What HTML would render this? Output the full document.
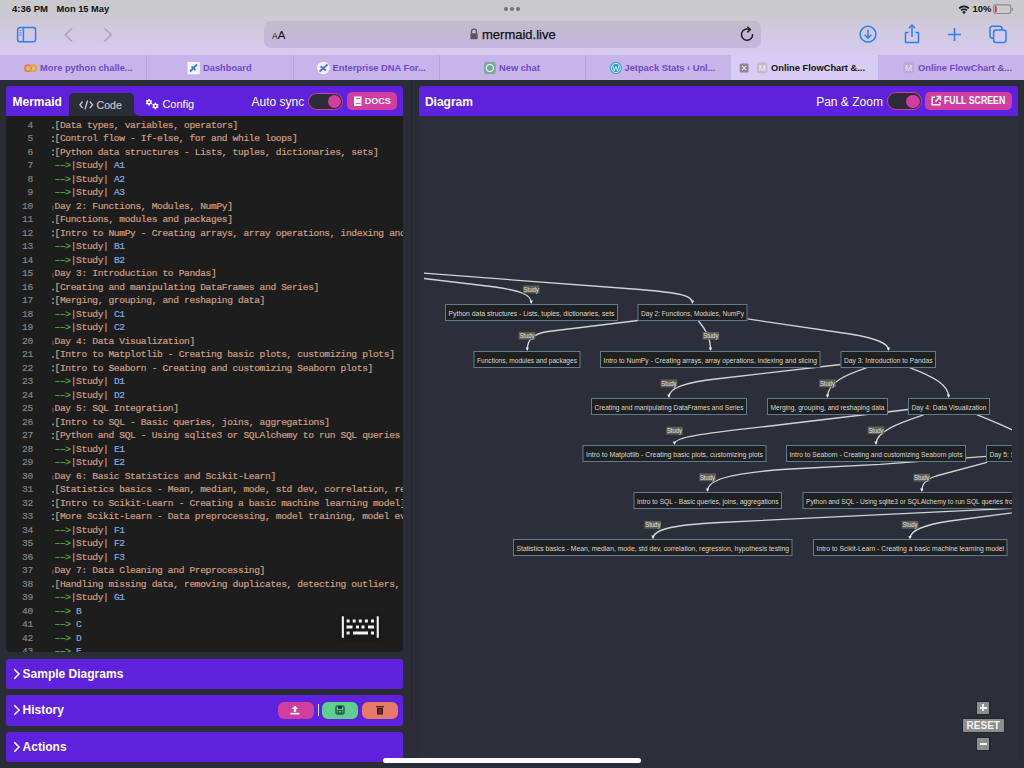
<!DOCTYPE html><html><head><meta charset="utf-8"><style>
*{margin:0;padding:0;box-sizing:border-box}
html,body{width:1024px;height:768px;overflow:hidden;background:#2a2d36;font-family:"Liberation Sans",sans-serif}
.a{position:absolute}
.top{left:0;top:0;width:1024px;height:55px;background:linear-gradient(#c9c9cc 0%,#cac9ce 20%,#d0cadf 55%,#d6caf2 100%)}
.tabs{left:0;top:55px;width:1024px;height:25px;background:#c6b4eb}
.tab{top:0;height:25px;width:146.3px;border-left:1px solid #b9a3e0}
.tabt{top:0;height:25px;line-height:27px;font-size:9.3px;font-weight:700;color:#7048cc;white-space:nowrap}
.hdr{background:#5e22dd;border-radius:4px 4px 0 0}
.wt{color:#fff;white-space:nowrap}
.code{background:#1d1d1d;overflow:hidden;border-radius:0 0 4px 4px}
.ln{font-family:"Liberation Mono",monospace;font-size:9.6px;letter-spacing:-0.36px;line-height:13.49px;white-space:pre;-webkit-text-stroke:0.2px currentColor}
.sec{background:#5e22dd;border-radius:3px}
</style></head><body>
<div class="a top"></div>
<div class="a wt" style="left:12px;top:2px;font-size:9.5px;font-weight:700;color:#111;line-height:14px">4:36 PM</div>
<div class="a wt" style="left:56.5px;top:2px;font-size:9.3px;font-weight:700;color:#111;line-height:14px">Mon 15 May</div>
<div class="a" style="left:504.0px;top:6.9px;width:3.8px;height:3.8px;border-radius:50%;background:#717176"></div>
<div class="a" style="left:510.0px;top:6.9px;width:3.8px;height:3.8px;border-radius:50%;background:#717176"></div>
<div class="a" style="left:516.0px;top:6.9px;width:3.8px;height:3.8px;border-radius:50%;background:#717176"></div>
<svg class="a" style="left:958px;top:4px" width="12" height="10" viewBox="0 0 12 10">
<path d="M1.2,4.3 A7,7 0 0 1 10.8,4.3" stroke="#111" stroke-width="1.7" fill="none"/>
<path d="M3.1,6.4 A4.2,4.2 0 0 1 8.9,6.4" stroke="#111" stroke-width="1.7" fill="none"/>
<path d="M4.6,8.2 A2,2 0 0 1 7.4,8.2 L6,9.4 Z" fill="#111" stroke="#111" stroke-width="0.8"/></svg>
<div class="a wt" style="left:972.5px;top:2.3px;font-size:9.4px;font-weight:700;color:#111;line-height:14px">10%</div>
<svg class="a" style="left:992px;top:3px" width="24" height="12" viewBox="0 0 24 12">
<rect x="1.6" y="1.9" width="17.2" height="8.6" rx="2.4" fill="none" stroke="#8c8b92" stroke-width="1.2"/>
<rect x="2.9" y="3.2" width="1.8" height="6" rx="0.6" fill="#e8332a"/>
<path d="M20,4.8 Q21,6.2 20,7.6" stroke="#8c8b92" stroke-width="1.2" fill="none"/></svg>
<svg class="a" style="left:16px;top:26px" width="22" height="18" viewBox="0 0 22 18">
<rect x="1.6" y="1.6" width="18" height="14.2" rx="2.3" fill="none" stroke="#2f7cf6" stroke-width="1.5"/>
<line x1="7.4" y1="1.6" x2="7.4" y2="15.8" stroke="#2f7cf6" stroke-width="1.5"/>
<line x1="3.6" y1="4.6" x2="5.4" y2="4.6" stroke="#2f7cf6" stroke-width="1"/>
<line x1="3.6" y1="6.8" x2="5.4" y2="6.8" stroke="#2f7cf6" stroke-width="1"/>
<line x1="3.6" y1="9" x2="5.4" y2="9" stroke="#2f7cf6" stroke-width="1"/></svg>
<svg class="a" style="left:60px;top:25px" width="60" height="20" viewBox="0 0 60 20">
<path d="M12.2,3.2 L5.2,9.8 L12.2,16.4" stroke="#a8a2b8" stroke-width="1.4" fill="none"/>
<path d="M44.3,3.2 L51.3,9.8 L44.3,16.4" stroke="#a8a2b8" stroke-width="1.4" fill="none"/></svg>
<div class="a" style="left:263.5px;top:21px;width:497.5px;height:26.5px;border-radius:7px;background:linear-gradient(#c0bdcb,#c4b5e2)"></div>
<div class="a wt" style="left:272px;top:26px;color:#111;line-height:16px"><span style="font-size:8.5px">A</span><span style="font-size:11.5px">A</span></div>
<svg class="a" style="left:468px;top:27px" width="12" height="14" viewBox="0 0 12 14">
<path d="M3.5,6.5 V4.6 A2.5,2.5 0 0 1 8.5,4.6 V6.5" stroke="#58565e" stroke-width="1.3" fill="none"/>
<rect x="2.4" y="6.3" width="7.2" height="6" rx="1" fill="#58565e"/></svg>
<div class="a wt" style="left:482px;top:26.6px;font-size:13px;color:#111;line-height:16px;-webkit-text-stroke:0.25px #111">mermaid.live</div>
<svg class="a" style="left:738px;top:25px" width="18" height="18" viewBox="0 0 18 18">
<path d="M11.5,4.6 A5.6,5.6 0 1 0 14.6,9" stroke="#222" stroke-width="1.5" fill="none"/>
<path d="M9.3,1.8 L12.4,4.6 L9.3,7.4" stroke="#222" stroke-width="1.5" fill="none"/></svg>
<svg class="a" style="left:855px;top:22px" width="160" height="24" viewBox="0 0 160 24">
<circle cx="13" cy="12.2" r="7.9" stroke="#2f7cf6" stroke-width="1.5" fill="none"/>
<path d="M13,7.5 V16 M9.6,12.8 L13,16.2 L16.4,12.8" stroke="#2f7cf6" stroke-width="1.5" fill="none"/>
<path d="M53.5,10.5 H50.5 V20.5 H63.5 V10.5 H60.5" stroke="#2f7cf6" stroke-width="1.5" fill="none" stroke-linejoin="round"/>
<path d="M57,15 V3.2 M53.8,6.2 L57,3 L60.2,6.2" stroke="#2f7cf6" stroke-width="1.5" fill="none"/>
<path d="M99.5,6 V19 M93,12.5 H106" stroke="#2f7cf6" stroke-width="1.6" fill="none"/>
<rect x="135" y="4.3" width="12" height="12" rx="2.5" stroke="#2f7cf6" stroke-width="1.5" fill="none"/>
<rect x="138.6" y="8" width="12.4" height="12.5" rx="2.5" stroke="#2f7cf6" stroke-width="1.5" fill="#d6c8ee"/></svg>
<div class="a tabs"></div>
<div class="a" style="left:0.00px;top:55px;width:146.29px;height:25px;background:transparent;border-left:none"></div>
<div class="a tabt" style="left:40.1px;top:55px;color:#7048cc">More python challe...</div>
<div class="a" style="left:146.29px;top:55px;width:146.29px;height:25px;background:transparent;border-left:1px solid #b8a2df"></div>
<div class="a tabt" style="left:203px;top:55px;color:#7048cc">Dashboard</div>
<div class="a" style="left:292.58px;top:55px;width:146.29px;height:25px;background:transparent;border-left:1px solid #b8a2df"></div>
<div class="a tabt" style="left:332.5px;top:55px;color:#7048cc">Enterprise DNA For...</div>
<div class="a" style="left:438.87px;top:55px;width:146.29px;height:25px;background:transparent;border-left:1px solid #b8a2df"></div>
<div class="a tabt" style="left:499px;top:55px;color:#7048cc">New chat</div>
<div class="a" style="left:585.16px;top:55px;width:146.29px;height:25px;background:transparent;border-left:1px solid #b8a2df"></div>
<div class="a tabt" style="left:624.5px;top:55px;color:#7048cc">Jetpack Stats ‹ Unl...</div>
<div class="a" style="left:731.45px;top:55px;width:146.29px;height:25px;background:#d7ccf3;border-left:none"></div>
<div class="a tabt" style="left:771px;top:55px;color:#111">Online FlowChart &amp;...</div>
<div class="a" style="left:877.74px;top:55px;width:146.29px;height:25px;background:transparent;border-left:none"></div>
<div class="a tabt" style="left:918px;top:55px;color:#7048cc">Online FlowChart &amp;...</div>
<svg class="a" style="left:0;top:55px" width="1024" height="25" viewBox="0 0 1024 25">
<circle cx="28.1" cy="13.2" r="3.05" stroke="#f07f10" stroke-width="1.7" fill="none"/>
<circle cx="33.3" cy="13.2" r="3.05" stroke="#f5a410" stroke-width="1.7" fill="none"/>
<rect x="187.5" y="7" width="12.3" height="12.3" fill="#f4f4f8"/>
<path d="M190,16.5 L197,9.5 M191.5,11.5 L195.5,15" stroke="#3a7bd5" stroke-width="1.8"/>
<circle cx="323.4" cy="13" r="6.2" fill="#f2f2f7"/>
<path d="M319.5,16.5 L327.5,9.5 M320.5,11.5 L326,15.5" stroke="#4a73d8" stroke-width="1.7"/>
<rect x="484" y="7" width="11.7" height="12" rx="2.5" fill="#74aa9c"/>
<circle cx="489.85" cy="13" r="3.5" stroke="#e9f5f0" stroke-width="1.1" fill="none"/>
<circle cx="615.9" cy="13" r="6.1" fill="#2aa0d8"/>
<circle cx="615.9" cy="13" r="4.6" fill="none" stroke="#e8f4fb" stroke-width="0.9"/>
<path d="M612.8,10.5 L614.3,16 L615.9,11.5 L617.5,16 L619,10.5" stroke="#e8f4fb" stroke-width="1" fill="none"/>
<rect x="739.7" y="8.6" width="8.8" height="8.8" rx="1.5" fill="#8a8591"/>
<path d="M742,10.9 L746.2,15.1 M746.2,10.9 L742,15.1" stroke="#e8e4ee" stroke-width="1.1"/>
<rect x="757" y="7.3" width="10.5" height="11" rx="2.5" fill="#c2bdc8"/>
<text x="762.25" y="16.3" font-family="Liberation Sans" font-size="8.5" fill="#f4f2f6" text-anchor="middle">M</text>
<rect x="903.3" y="7.3" width="10.6" height="11" rx="2.5" fill="#b9acd2"/>
<text x="908.6" y="16.3" font-family="Liberation Sans" font-size="8.5" fill="#ece6f6" text-anchor="middle">M</text>
</svg>
<div class="a hdr" style="left:6px;top:86px;width:397px;height:30px"></div>
<div class="a wt" style="left:12.5px;top:94px;font-size:12px;font-weight:700;line-height:16px">Mermaid</div>
<div class="a" style="left:68.7px;top:92.5px;width:65.4px;height:24px;background:#2a2d36;border-radius:5px 5px 0 0"></div>
<div class="a" style="left:134px;top:108px;width:8px;height:8px;background:#2a2d36"></div>
<div class="a" style="left:134px;top:100px;width:8px;height:16px;background:#5e22dd;border-radius:0 0 0 6px"></div>
<svg class="a" style="left:79px;top:100px" width="15" height="10" viewBox="0 0 15 10">
<path d="M3.6,1.5 L0.9,4.8 L3.6,8.1 M10.8,1.5 L13.5,4.8 L10.8,8.1 M8.6,0.5 L6,9.2" stroke="#c9c9d1" stroke-width="1.35" fill="none"/></svg>
<div class="a wt" style="left:96.5px;top:96.6px;font-size:10.6px;line-height:16px;color:#c9c9d1;-webkit-text-stroke:0.15px #c9c9d1">Code</div>
<svg class="a" style="left:140px;top:95px" width="25" height="18" viewBox="0 0 25 18"><circle cx="9" cy="7.3" r="2.45" fill="#fff"/><line x1="9.00" y1="3.95" x2="9.00" y2="10.65" stroke="#fff" stroke-width="1.5"/><line x1="11.90" y1="5.62" x2="6.10" y2="8.97" stroke="#fff" stroke-width="1.5"/><line x1="11.90" y1="8.97" x2="6.10" y2="5.62" stroke="#fff" stroke-width="1.5"/><circle cx="9" cy="7.3" r="0.95" fill="#5e22dd"/><circle cx="15.4" cy="11" r="2.45" fill="#fff"/><line x1="15.40" y1="7.65" x2="15.40" y2="14.35" stroke="#fff" stroke-width="1.5"/><line x1="18.30" y1="9.32" x2="12.50" y2="12.68" stroke="#fff" stroke-width="1.5"/><line x1="18.30" y1="12.68" x2="12.50" y2="9.32" stroke="#fff" stroke-width="1.5"/><circle cx="15.4" cy="11" r="0.95" fill="#5e22dd"/></svg>
<div class="a wt" style="left:162.4px;top:96px;font-size:11px;line-height:16px">Config</div>
<div class="a wt" style="left:251.6px;top:94px;font-size:12px;line-height:16px">Auto sync</div>
<div class="a" style="left:308.4px;top:92.6px;width:35px;height:17.6px;border-radius:9px;background:#2a2d36;border:1px solid #d03e9f"></div>
<div class="a" style="left:328px;top:94.8px;width:13.4px;height:13.4px;border-radius:50%;background:#d03e9f"></div>
<div class="a" style="left:347px;top:92px;width:50.4px;height:17.8px;border-radius:5px;background:#d03e9f"></div>
<svg class="a" style="left:353px;top:96px" width="10" height="11" viewBox="0 0 10 11">
<path d="M1,1.5 A1,1 0 0 1 2,0.5 H8.5 V10 H2 A1,1 0 0 1 1,9 Z" fill="#fff"/>
<path d="M2.6,7.6 H7.6 M3,2.6 H7" stroke="#d03e9f" stroke-width="0.9"/></svg>
<div class="a wt" style="left:364.8px;top:93px;font-size:9px;font-weight:700;line-height:16px">DOCS</div>
<div class="a code" style="left:6px;top:116px;width:397px;height:535.5px"></div>
<div class="a" style="left:6px;top:116px;width:397px;height:535.5px;overflow:hidden">
<div class="a ln" style="left:21.40px;top:3.00px;color:#858585">4</div>
<div class="a ln" style="left:48.50px;top:3.00px;color:#ce9f82">[Data types, variables, operators]</div>
<div class="a ln" style="left:21.40px;top:16.49px;color:#858585">5</div>
<div class="a ln" style="left:48.50px;top:16.49px;color:#ce9f82">[Control flow - If-else, for and while loops]</div>
<div class="a ln" style="left:21.40px;top:29.98px;color:#858585">6</div>
<div class="a ln" style="left:48.50px;top:29.98px;color:#ce9f82">[Python data structures - Lists, tuples, dictionaries, sets]</div>
<div class="a ln" style="left:21.40px;top:43.47px;color:#858585">7</div>
<div class="a ln" style="left:48.50px;top:43.47px"><span style="color:#55b534">––&gt;</span><span style="color:#ce9f82">|Study|</span> <span style="color:#82ade0">A1</span></div>
<div class="a ln" style="left:21.40px;top:56.96px;color:#858585">8</div>
<div class="a ln" style="left:48.50px;top:56.96px"><span style="color:#55b534">––&gt;</span><span style="color:#ce9f82">|Study|</span> <span style="color:#82ade0">A2</span></div>
<div class="a ln" style="left:21.40px;top:70.45px;color:#858585">9</div>
<div class="a ln" style="left:48.50px;top:70.45px"><span style="color:#55b534">––&gt;</span><span style="color:#ce9f82">|Study|</span> <span style="color:#82ade0">A3</span></div>
<div class="a ln" style="left:16.00px;top:83.94px;color:#858585">10</div>
<div class="a ln" style="left:48.50px;top:83.94px;color:#ce9f82">Day 2: Functions, Modules, NumPy]</div>
<div class="a ln" style="left:16.00px;top:97.43px;color:#858585">11</div>
<div class="a ln" style="left:48.50px;top:97.43px;color:#ce9f82">[Functions, modules and packages]</div>
<div class="a ln" style="left:16.00px;top:110.92px;color:#858585">12</div>
<div class="a ln" style="left:48.50px;top:110.92px;color:#ce9f82">[Intro to NumPy - Creating arrays, array operations, indexing and slicing]</div>
<div class="a ln" style="left:16.00px;top:124.41px;color:#858585">13</div>
<div class="a ln" style="left:48.50px;top:124.41px"><span style="color:#55b534">––&gt;</span><span style="color:#ce9f82">|Study|</span> <span style="color:#82ade0">B1</span></div>
<div class="a ln" style="left:16.00px;top:137.90px;color:#858585">14</div>
<div class="a ln" style="left:48.50px;top:137.90px"><span style="color:#55b534">––&gt;</span><span style="color:#ce9f82">|Study|</span> <span style="color:#82ade0">B2</span></div>
<div class="a ln" style="left:16.00px;top:151.39px;color:#858585">15</div>
<div class="a ln" style="left:48.50px;top:151.39px;color:#ce9f82">Day 3: Introduction to Pandas]</div>
<div class="a ln" style="left:16.00px;top:164.88px;color:#858585">16</div>
<div class="a ln" style="left:48.50px;top:164.88px;color:#ce9f82">[Creating and manipulating DataFrames and Series]</div>
<div class="a ln" style="left:16.00px;top:178.37px;color:#858585">17</div>
<div class="a ln" style="left:48.50px;top:178.37px;color:#ce9f82">[Merging, grouping, and reshaping data]</div>
<div class="a ln" style="left:16.00px;top:191.86px;color:#858585">18</div>
<div class="a ln" style="left:48.50px;top:191.86px"><span style="color:#55b534">––&gt;</span><span style="color:#ce9f82">|Study|</span> <span style="color:#82ade0">C1</span></div>
<div class="a ln" style="left:16.00px;top:205.35px;color:#858585">19</div>
<div class="a ln" style="left:48.50px;top:205.35px"><span style="color:#55b534">––&gt;</span><span style="color:#ce9f82">|Study|</span> <span style="color:#82ade0">C2</span></div>
<div class="a ln" style="left:16.00px;top:218.84px;color:#858585">20</div>
<div class="a ln" style="left:48.50px;top:218.84px;color:#ce9f82">Day 4: Data Visualization]</div>
<div class="a ln" style="left:16.00px;top:232.33px;color:#858585">21</div>
<div class="a ln" style="left:48.50px;top:232.33px;color:#ce9f82">[Intro to Matplotlib - Creating basic plots, customizing plots]</div>
<div class="a ln" style="left:16.00px;top:245.82px;color:#858585">22</div>
<div class="a ln" style="left:48.50px;top:245.82px;color:#ce9f82">[Intro to Seaborn - Creating and customizing Seaborn plots]</div>
<div class="a ln" style="left:16.00px;top:259.31px;color:#858585">23</div>
<div class="a ln" style="left:48.50px;top:259.31px"><span style="color:#55b534">––&gt;</span><span style="color:#ce9f82">|Study|</span> <span style="color:#82ade0">D1</span></div>
<div class="a ln" style="left:16.00px;top:272.80px;color:#858585">24</div>
<div class="a ln" style="left:48.50px;top:272.80px"><span style="color:#55b534">––&gt;</span><span style="color:#ce9f82">|Study|</span> <span style="color:#82ade0">D2</span></div>
<div class="a ln" style="left:16.00px;top:286.29px;color:#858585">25</div>
<div class="a ln" style="left:48.50px;top:286.29px;color:#ce9f82">Day 5: SQL Integration]</div>
<div class="a ln" style="left:16.00px;top:299.78px;color:#858585">26</div>
<div class="a ln" style="left:48.50px;top:299.78px;color:#ce9f82">[Intro to SQL - Basic queries, joins, aggregations]</div>
<div class="a ln" style="left:16.00px;top:313.27px;color:#858585">27</div>
<div class="a ln" style="left:48.50px;top:313.27px;color:#ce9f82">[Python and SQL - Using sqlite3 or SQLAlchemy to run SQL queries from Python]</div>
<div class="a ln" style="left:16.00px;top:326.76px;color:#858585">28</div>
<div class="a ln" style="left:48.50px;top:326.76px"><span style="color:#55b534">––&gt;</span><span style="color:#ce9f82">|Study|</span> <span style="color:#82ade0">E1</span></div>
<div class="a ln" style="left:16.00px;top:340.25px;color:#858585">29</div>
<div class="a ln" style="left:48.50px;top:340.25px"><span style="color:#55b534">––&gt;</span><span style="color:#ce9f82">|Study|</span> <span style="color:#82ade0">E2</span></div>
<div class="a ln" style="left:16.00px;top:353.74px;color:#858585">30</div>
<div class="a ln" style="left:48.50px;top:353.74px;color:#ce9f82">Day 6: Basic Statistics and Scikit-Learn]</div>
<div class="a ln" style="left:16.00px;top:367.23px;color:#858585">31</div>
<div class="a ln" style="left:48.50px;top:367.23px;color:#ce9f82">[Statistics basics - Mean, median, mode, std dev, correlation, regression, hypothesis testing]</div>
<div class="a ln" style="left:16.00px;top:380.72px;color:#858585">32</div>
<div class="a ln" style="left:48.50px;top:380.72px;color:#ce9f82">[Intro to Scikit-Learn - Creating a basic machine learning model]</div>
<div class="a ln" style="left:16.00px;top:394.21px;color:#858585">33</div>
<div class="a ln" style="left:48.50px;top:394.21px;color:#ce9f82">[More Scikit-Learn - Data preprocessing, model training, model evaluation]</div>
<div class="a ln" style="left:16.00px;top:407.70px;color:#858585">34</div>
<div class="a ln" style="left:48.50px;top:407.70px"><span style="color:#55b534">––&gt;</span><span style="color:#ce9f82">|Study|</span> <span style="color:#82ade0">F1</span></div>
<div class="a ln" style="left:16.00px;top:421.19px;color:#858585">35</div>
<div class="a ln" style="left:48.50px;top:421.19px"><span style="color:#55b534">––&gt;</span><span style="color:#ce9f82">|Study|</span> <span style="color:#82ade0">F2</span></div>
<div class="a ln" style="left:16.00px;top:434.68px;color:#858585">36</div>
<div class="a ln" style="left:48.50px;top:434.68px"><span style="color:#55b534">––&gt;</span><span style="color:#ce9f82">|Study|</span> <span style="color:#82ade0">F3</span></div>
<div class="a ln" style="left:16.00px;top:448.17px;color:#858585">37</div>
<div class="a ln" style="left:48.50px;top:448.17px;color:#ce9f82">Day 7: Data Cleaning and Preprocessing]</div>
<div class="a ln" style="left:16.00px;top:461.66px;color:#858585">38</div>
<div class="a ln" style="left:48.50px;top:461.66px;color:#ce9f82">[Handling missing data, removing duplicates, detecting outliers, etc]</div>
<div class="a ln" style="left:16.00px;top:475.15px;color:#858585">39</div>
<div class="a ln" style="left:48.50px;top:475.15px"><span style="color:#55b534">––&gt;</span><span style="color:#ce9f82">|Study|</span> <span style="color:#82ade0">G1</span></div>
<div class="a ln" style="left:16.00px;top:488.64px;color:#858585">40</div>
<div class="a ln" style="left:48.50px;top:488.64px"><span style="color:#55b534">––&gt;</span> <span style="color:#82ade0">B</span></div>
<div class="a ln" style="left:16.00px;top:502.13px;color:#858585">41</div>
<div class="a ln" style="left:48.50px;top:502.13px"><span style="color:#55b534">––&gt;</span> <span style="color:#82ade0">C</span></div>
<div class="a ln" style="left:16.00px;top:515.62px;color:#858585">42</div>
<div class="a ln" style="left:48.50px;top:515.62px"><span style="color:#55b534">––&gt;</span> <span style="color:#82ade0">D</span></div>
<div class="a ln" style="left:16.00px;top:529.11px;color:#858585">43</div>
<div class="a ln" style="left:48.50px;top:529.11px"><span style="color:#55b534">––&gt;</span> <span style="color:#82ade0">E</span></div>
</div>
<svg class="a" style="left:0;top:0" width="60" height="660" viewBox="0 0 60 660">
<rect x="52.2" y="126.9" width="1.6" height="1.6" fill="#82ade0"/>
<rect x="52.2" y="136.2" width="1.6" height="1.6" fill="#82ade0"/><rect x="52.2" y="140.4" width="1.6" height="1.6" fill="#82ade0"/>
<rect x="52.2" y="149.7" width="1.6" height="1.6" fill="#82ade0"/><rect x="52.2" y="153.9" width="1.6" height="1.6" fill="#82ade0"/>
<rect x="52.4" y="205.6" width="1.1" height="4.6" fill="#ce9f82" opacity="0.45"/>
<rect x="52.2" y="221.3" width="1.6" height="1.6" fill="#82ade0"/>
<rect x="52.2" y="230.6" width="1.6" height="1.6" fill="#82ade0"/><rect x="52.2" y="234.8" width="1.6" height="1.6" fill="#82ade0"/>
<rect x="52.4" y="273.1" width="1.1" height="4.6" fill="#ce9f82" opacity="0.45"/>
<rect x="52.2" y="288.8" width="1.6" height="1.6" fill="#82ade0"/>
<rect x="52.2" y="298.1" width="1.6" height="1.6" fill="#82ade0"/><rect x="52.2" y="302.3" width="1.6" height="1.6" fill="#82ade0"/>
<rect x="52.4" y="340.5" width="1.1" height="4.6" fill="#ce9f82" opacity="0.45"/>
<rect x="52.2" y="356.2" width="1.6" height="1.6" fill="#82ade0"/>
<rect x="52.2" y="365.5" width="1.6" height="1.6" fill="#82ade0"/><rect x="52.2" y="369.7" width="1.6" height="1.6" fill="#82ade0"/>
<rect x="52.4" y="408.0" width="1.1" height="4.6" fill="#ce9f82" opacity="0.45"/>
<rect x="52.2" y="423.7" width="1.6" height="1.6" fill="#82ade0"/>
<rect x="52.2" y="433.0" width="1.6" height="1.6" fill="#82ade0"/><rect x="52.2" y="437.2" width="1.6" height="1.6" fill="#82ade0"/>
<rect x="52.4" y="475.4" width="1.1" height="4.6" fill="#ce9f82" opacity="0.45"/>
<rect x="52.2" y="491.1" width="1.6" height="1.6" fill="#82ade0"/>
<rect x="52.2" y="500.4" width="1.6" height="1.6" fill="#82ade0"/><rect x="52.2" y="504.6" width="1.6" height="1.6" fill="#82ade0"/>
<rect x="52.2" y="513.9" width="1.6" height="1.6" fill="#82ade0"/><rect x="52.2" y="518.1" width="1.6" height="1.6" fill="#82ade0"/>
<rect x="52.4" y="569.9" width="1.1" height="4.6" fill="#ce9f82" opacity="0.45"/>
<rect x="52.2" y="585.6" width="1.6" height="1.6" fill="#82ade0"/>
</svg>
<svg class="a" style="left:338px;top:612px" width="45" height="30" viewBox="0 0 45 30">
<rect x="0" y="0" width="45" height="30" rx="5" fill="#1a1a1a"/>
<g fill="#f2f2f2">
<rect x="3.8" y="4.3" width="2.1" height="21.5"/><rect x="38.7" y="4.3" width="2.1" height="21.5"/>
<rect x="8.6" y="7.5" width="3" height="3"/><rect x="14.7" y="7.5" width="3" height="3"/><rect x="20.8" y="7.5" width="3" height="3"/><rect x="26.9" y="7.5" width="3" height="3"/><rect x="33" y="7.5" width="3" height="3"/>
<rect x="8.5" y="13.5" width="6" height="3"/><rect x="18" y="13.5" width="3" height="3"/><rect x="23.5" y="13.5" width="3" height="3"/><rect x="30" y="13.5" width="6" height="3"/>
<rect x="8.6" y="19.5" width="3" height="3"/><rect x="15" y="19.5" width="15" height="3"/><rect x="33" y="19.5" width="3" height="3"/>
</g></svg>
<div class="a sec" style="left:6px;top:658.5px;width:397px;height:30px"></div>
<svg class="a" style="left:12px;top:667.5px" width="10" height="12" viewBox="0 0 10 12"><path d="M2.3,1.2 L7,6 L2.3,10.8" stroke="#fff" stroke-width="1.6" fill="none"/></svg>
<div class="a wt" style="left:22.6px;top:665.5px;font-size:12px;font-weight:700;line-height:16px">Sample Diagrams</div>
<div class="a sec" style="left:6px;top:694.5px;width:397px;height:31px"></div>
<svg class="a" style="left:12px;top:704.0px" width="10" height="12" viewBox="0 0 10 12"><path d="M2.3,1.2 L7,6 L2.3,10.8" stroke="#fff" stroke-width="1.6" fill="none"/></svg>
<div class="a wt" style="left:22.6px;top:702.0px;font-size:12px;font-weight:700;line-height:16px">History</div>
<div class="a sec" style="left:6px;top:732px;width:397px;height:29.5px"></div>
<svg class="a" style="left:12px;top:740.8px" width="10" height="12" viewBox="0 0 10 12"><path d="M2.3,1.2 L7,6 L2.3,10.8" stroke="#fff" stroke-width="1.6" fill="none"/></svg>
<div class="a wt" style="left:22.6px;top:738.8px;font-size:12px;font-weight:700;line-height:16px">Actions</div>
<div class="a" style="left:277.5px;top:702px;width:36px;height:17px;border-radius:6px;background:#d03e9f"></div>
<svg class="a" style="left:289px;top:704px" width="12" height="12" viewBox="0 0 12 12">
<path d="M6,1.5 L9.2,5 H7.2 V8 H4.8 V5 H2.8 Z" fill="#fff"/><rect x="1.5" y="8.8" width="9" height="1.6" fill="#fff"/></svg>
<div class="a" style="left:317.5px;top:704px;width:1.3px;height:12px;background:#e8e0ff"></div>
<div class="a" style="left:322px;top:701.5px;width:36px;height:17.5px;border-radius:6px;background:#5fcf8f"></div>
<svg class="a" style="left:335px;top:705px" width="10" height="10" viewBox="0 0 10 10">
<rect x="1" y="1" width="8" height="8" rx="1" fill="none" stroke="#123" stroke-width="1"/><rect x="3" y="1.3" width="4" height="2.4" fill="#123"/><rect x="3" y="5.5" width="4" height="2.5" fill="none" stroke="#123" stroke-width="0.8"/></svg>
<div class="a" style="left:362px;top:701.5px;width:36px;height:17.5px;border-radius:6px;background:#e57a68"></div>
<svg class="a" style="left:375px;top:705px" width="10" height="10" viewBox="0 0 10 10">
<rect x="1.2" y="1.2" width="7.6" height="1.2" fill="#3a1010"/><rect x="2" y="3" width="6" height="6.5" rx="0.8" fill="#3a1010"/><path d="M4,4 V8.5 M6,4 V8.5" stroke="#e57a68" stroke-width="0.6"/></svg>
<div class="a" style="left:410.5px;top:80px;width:1.2px;height:640px;background:#23262d"></div>
<div class="a" style="left:419px;top:116px;width:599px;height:645px;background:#2c2f39"></div>
<div class="a hdr" style="left:419px;top:86px;width:599px;height:30px"></div>
<div class="a wt" style="left:424.9px;top:93.5px;font-size:12px;font-weight:700;line-height:16px">Diagram</div>
<div class="a wt" style="left:816.2px;top:93.8px;font-size:12px;line-height:16px">Pan &amp; Zoom</div>
<div class="a" style="left:886.5px;top:92.3px;width:35.3px;height:17.8px;border-radius:9px;background:#2a2d36;border:1px solid #d03e9f"></div>
<div class="a" style="left:906.3px;top:94.5px;width:13.4px;height:13.4px;border-radius:50%;background:#d03e9f"></div>
<div class="a" style="left:925.3px;top:92.4px;width:86.3px;height:17.9px;border-radius:5px;background:#d03e9f"></div>
<svg class="a" style="left:930px;top:95px" width="12" height="12" viewBox="0 0 12 12">
<path d="M5,2.2 H2.2 V9.8 H9.8 V7" stroke="#fff" stroke-width="1.4" fill="none"/>
<path d="M6.5,1.5 H10.5 V5.5 M10.3,1.7 L5.5,6.5" stroke="#fff" stroke-width="1.4" fill="none"/></svg>
<div class="a wt" style="left:943.9px;top:93px;font-size:10px;font-weight:700;line-height:16px;transform:scaleX(0.878);transform-origin:0 0">FULL SCREEN</div>
<svg class="a" style="left:0;top:0" width="1024" height="768" viewBox="0 0 1024 768">
<defs><clipPath id="dc"><rect x="424" y="116" width="588" height="645"/></clipPath></defs>
<g clip-path="url(#dc)">
<path d="M424,273.2 L640,289.5 C682,293 692.5,296 692.5,303" stroke="#d3d3d3" stroke-width="1.3" fill="none"/>
<path d="M424,278.5 L495,287 C522,291 531.3,295 531.3,303" stroke="#d3d3d3" stroke-width="1.3" fill="none"/>
<path d="M638,320.5 L548,331.5 C532,334 527.3,340 527.3,350" stroke="#d3d3d3" stroke-width="1.3" fill="none"/>
<path d="M698.5,321 C706,330 710.5,338 710.5,350" stroke="#d3d3d3" stroke-width="1.3" fill="none"/>
<path d="M747.5,318.9 L850,334 C880,339 888.5,344 888.5,350" stroke="#d3d3d3" stroke-width="1.3" fill="none"/>
<path d="M840.5,364.5 L720,378.5 C684,382.5 668.9,388 668.9,397" stroke="#d3d3d3" stroke-width="1.3" fill="none"/>
<path d="M866.8,367.7 C846,375 827.5,382 827.5,397" stroke="#d3d3d3" stroke-width="1.3" fill="none"/>
<path d="M909.7,367.7 C934,377 948.6,385 948.6,397" stroke="#d3d3d3" stroke-width="1.3" fill="none"/>
<path d="M908,409.5 L770,426 C700,434 674.4,437 674.4,444" stroke="#d3d3d3" stroke-width="1.3" fill="none"/>
<path d="M923.6,414.9 C896,424 876,432 876,444" stroke="#d3d3d3" stroke-width="1.3" fill="none"/>
<path d="M975.4,414 C1005,426 1030,436 1030,445" stroke="#d3d3d3" stroke-width="1.3" fill="none"/>
<path d="M986,456.4 L880,464.4 L790,469 C725,473 707.5,481 707.5,491" stroke="#d3d3d3" stroke-width="1.3" fill="none"/>
<path d="M987,462.3 L936,476 C926,479 921.8,485 921.8,491" stroke="#d3d3d3" stroke-width="1.3" fill="none"/>
<path d="M1030,507.5 L720,522.5 C670,525 653,530 653,538.5" stroke="#d3d3d3" stroke-width="1.3" fill="none"/>
<path d="M1030,510.5 L950,521 C924,525 910,530 910,538.3" stroke="#d3d3d3" stroke-width="1.3" fill="none"/>
<path d="M690.9,300.6 L694.1,300.6 L692.5,304.0 Z" fill="#e8e8e8"/>
<path d="M529.7,300.6 L532.9,300.6 L531.3,304.0 Z" fill="#e8e8e8"/>
<path d="M525.7,347.6 L528.9,347.6 L527.3,351.0 Z" fill="#e8e8e8"/>
<path d="M708.9,347.6 L712.1,347.6 L710.5,351.0 Z" fill="#e8e8e8"/>
<path d="M886.9,347.6 L890.1,347.6 L888.5,351.0 Z" fill="#e8e8e8"/>
<path d="M667.3,394.6 L670.5,394.6 L668.9,398.0 Z" fill="#e8e8e8"/>
<path d="M825.9,394.6 L829.1,394.6 L827.5,398.0 Z" fill="#e8e8e8"/>
<path d="M947.0,394.6 L950.2,394.6 L948.6,398.0 Z" fill="#e8e8e8"/>
<path d="M672.8,441.6 L676.0,441.6 L674.4,445.0 Z" fill="#e8e8e8"/>
<path d="M874.4,441.6 L877.6,441.6 L876.0,445.0 Z" fill="#e8e8e8"/>
<path d="M705.9,488.6 L709.1,488.6 L707.5,492.0 Z" fill="#e8e8e8"/>
<path d="M920.2,488.6 L923.4,488.6 L921.8,492.0 Z" fill="#e8e8e8"/>
<path d="M651.4,535.6 L654.6,535.6 L653.0,539.0 Z" fill="#e8e8e8"/>
<path d="M908.4,535.9 L911.6,535.9 L910.0,539.3 Z" fill="#e8e8e8"/>
<rect x="445.5" y="304.5" width="172" height="16" fill="#1f2020" stroke="#5f7b96" stroke-width="1"/>
<rect x="638.0" y="304.5" width="109.0" height="16" fill="#1f2020" stroke="#5f7b96" stroke-width="1"/>
<rect x="474.0" y="351.5" width="106.0" height="16" fill="#1f2020" stroke="#5f7b96" stroke-width="1"/>
<rect x="600.5" y="351.5" width="219.5" height="16" fill="#1f2020" stroke="#5f7b96" stroke-width="1"/>
<rect x="841.0" y="351.5" width="94.5" height="16" fill="#1f2020" stroke="#5f7b96" stroke-width="1"/>
<rect x="591.5" y="398.5" width="155" height="16" fill="#1f2020" stroke="#5f7b96" stroke-width="1"/>
<rect x="767.5" y="398.5" width="120" height="16" fill="#1f2020" stroke="#5f7b96" stroke-width="1"/>
<rect x="908.5" y="398.5" width="81" height="16" fill="#1f2020" stroke="#5f7b96" stroke-width="1"/>
<rect x="583.0" y="445.5" width="183.0" height="16" fill="#1f2020" stroke="#5f7b96" stroke-width="1"/>
<rect x="786.5" y="445.5" width="179" height="16" fill="#1f2020" stroke="#5f7b96" stroke-width="1"/>
<rect x="986.5" y="445.5" width="74" height="16" fill="#1f2020" stroke="#5f7b96" stroke-width="1"/>
<rect x="634.0" y="492.5" width="147.5" height="16" fill="#1f2020" stroke="#5f7b96" stroke-width="1"/>
<rect x="803.0" y="492.5" width="240.5" height="16" fill="#1f2020" stroke="#5f7b96" stroke-width="1"/>
<rect x="513.5" y="539.5" width="278.5" height="16" fill="#1f2020" stroke="#5f7b96" stroke-width="1"/>
<rect x="813.5" y="539.5" width="193.5" height="16" fill="#1f2020" stroke="#5f7b96" stroke-width="1"/>
<text x="448.5" y="315.6" font-family="Liberation Sans" font-size="7" fill="#d8d8d8" textLength="166" lengthAdjust="spacingAndGlyphs">Python data structures - Lists, tuples, dictionaries, sets</text>
<text x="641.0" y="315.6" font-family="Liberation Sans" font-size="7" fill="#d8d8d8" textLength="103.0" lengthAdjust="spacingAndGlyphs">Day 2: Functions, Modules, NumPy</text>
<text x="477.0" y="362.6" font-family="Liberation Sans" font-size="7" fill="#d8d8d8" textLength="100.0" lengthAdjust="spacingAndGlyphs">Functions, modules and packages</text>
<text x="603.5" y="362.6" font-family="Liberation Sans" font-size="7" fill="#d8d8d8" textLength="213.5" lengthAdjust="spacingAndGlyphs">Intro to NumPy - Creating arrays, array operations, indexing and slicing</text>
<text x="844.0" y="362.6" font-family="Liberation Sans" font-size="7" fill="#d8d8d8" textLength="88.5" lengthAdjust="spacingAndGlyphs">Day 3: Introduction to Pandas</text>
<text x="594.5" y="409.6" font-family="Liberation Sans" font-size="7" fill="#d8d8d8" textLength="149" lengthAdjust="spacingAndGlyphs">Creating and manipulating DataFrames and Series</text>
<text x="770.5" y="409.6" font-family="Liberation Sans" font-size="7" fill="#d8d8d8" textLength="114" lengthAdjust="spacingAndGlyphs">Merging, grouping, and reshaping data</text>
<text x="911.5" y="409.6" font-family="Liberation Sans" font-size="7" fill="#d8d8d8" textLength="75" lengthAdjust="spacingAndGlyphs">Day 4: Data Visualization</text>
<text x="586.0" y="456.6" font-family="Liberation Sans" font-size="7" fill="#d8d8d8" textLength="177.0" lengthAdjust="spacingAndGlyphs">Intro to Matplotlib - Creating basic plots, customizing plots</text>
<text x="789.5" y="456.6" font-family="Liberation Sans" font-size="7" fill="#d8d8d8" textLength="173" lengthAdjust="spacingAndGlyphs">Intro to Seaborn - Creating and customizing Seaborn plots</text>
<text x="989.5" y="456.6" font-family="Liberation Sans" font-size="7" fill="#d8d8d8" textLength="68" lengthAdjust="spacingAndGlyphs">Day 5: SQL Integration</text>
<text x="637.0" y="503.6" font-family="Liberation Sans" font-size="7" fill="#d8d8d8" textLength="141.5" lengthAdjust="spacingAndGlyphs">Intro to SQL - Basic queries, joins, aggregations</text>
<text x="806.0" y="503.6" font-family="Liberation Sans" font-size="7" fill="#d8d8d8" textLength="234.5" lengthAdjust="spacingAndGlyphs">Python and SQL - Using sqlite3 or SQLAlchemy to run SQL queries from Python</text>
<text x="516.5" y="550.6" font-family="Liberation Sans" font-size="7" fill="#d8d8d8" textLength="272.5" lengthAdjust="spacingAndGlyphs">Statistics basics - Mean, median, mode, std dev, correlation, regression, hypothesis testing</text>
<text x="816.5" y="550.6" font-family="Liberation Sans" font-size="7" fill="#d8d8d8" textLength="187.5" lengthAdjust="spacingAndGlyphs">Intro to Scikit-Learn - Creating a basic machine learning model</text>
<rect x="522.9" y="285.5" width="16.6" height="7.8" fill="#5e5e5a"/>
<text x="523.6" y="291.9" font-family="Liberation Sans" font-size="6.9" fill="#e2e2dc" textLength="15.2" lengthAdjust="spacingAndGlyphs">Study</text>
<rect x="518.7" y="331.9" width="16.6" height="7.8" fill="#5e5e5a"/>
<text x="519.4" y="338.3" font-family="Liberation Sans" font-size="6.9" fill="#e2e2dc" textLength="15.2" lengthAdjust="spacingAndGlyphs">Study</text>
<rect x="702.5" y="331.9" width="16.6" height="7.8" fill="#5e5e5a"/>
<text x="703.2" y="338.3" font-family="Liberation Sans" font-size="6.9" fill="#e2e2dc" textLength="15.2" lengthAdjust="spacingAndGlyphs">Study</text>
<rect x="660.6" y="379.5" width="16.6" height="7.8" fill="#5e5e5a"/>
<text x="661.3" y="385.9" font-family="Liberation Sans" font-size="6.9" fill="#e2e2dc" textLength="15.2" lengthAdjust="spacingAndGlyphs">Study</text>
<rect x="819.2" y="379.5" width="16.6" height="7.8" fill="#5e5e5a"/>
<text x="819.9" y="385.9" font-family="Liberation Sans" font-size="6.9" fill="#e2e2dc" textLength="15.2" lengthAdjust="spacingAndGlyphs">Study</text>
<rect x="666.2" y="426.8" width="16.6" height="7.8" fill="#5e5e5a"/>
<text x="666.9" y="433.2" font-family="Liberation Sans" font-size="6.9" fill="#e2e2dc" textLength="15.2" lengthAdjust="spacingAndGlyphs">Study</text>
<rect x="867.7" y="426.4" width="16.6" height="7.8" fill="#5e5e5a"/>
<text x="868.4" y="432.8" font-family="Liberation Sans" font-size="6.9" fill="#e2e2dc" textLength="15.2" lengthAdjust="spacingAndGlyphs">Study</text>
<rect x="699.2" y="473.3" width="16.6" height="7.8" fill="#5e5e5a"/>
<text x="699.9" y="479.7" font-family="Liberation Sans" font-size="6.9" fill="#e2e2dc" textLength="15.2" lengthAdjust="spacingAndGlyphs">Study</text>
<rect x="913.4" y="473.8" width="16.6" height="7.8" fill="#5e5e5a"/>
<text x="914.1" y="480.2" font-family="Liberation Sans" font-size="6.9" fill="#e2e2dc" textLength="15.2" lengthAdjust="spacingAndGlyphs">Study</text>
<rect x="644.5" y="520.9" width="16.6" height="7.8" fill="#5e5e5a"/>
<text x="645.2" y="527.3" font-family="Liberation Sans" font-size="6.9" fill="#e2e2dc" textLength="15.2" lengthAdjust="spacingAndGlyphs">Study</text>
<rect x="901.7" y="520.9" width="16.6" height="7.8" fill="#5e5e5a"/>
<text x="902.4" y="527.3" font-family="Liberation Sans" font-size="6.9" fill="#e2e2dc" textLength="15.2" lengthAdjust="spacingAndGlyphs">Study</text>
</g></svg>
<div class="a" style="left:975.5px;top:700.5px;width:15px;height:14.5px;background:#1d1f25;opacity:.6"></div>
<div class="a" style="left:976.6px;top:701.7px;width:12.9px;height:12.2px;background:#8d8d8d"></div>
<div class="a" style="left:979.5px;top:707px;width:7px;height:1.7px;background:#f4f4f4"></div>
<div class="a" style="left:982.2px;top:704.3px;width:1.7px;height:7px;background:#f4f4f4"></div>
<div class="a" style="left:961.5px;top:718px;width:43.5px;height:15px;background:#1d1f25;opacity:.6"></div>
<div class="a" style="left:962.5px;top:719px;width:41.5px;height:13px;background:#8d8d8d"></div>
<div class="a wt" style="left:962.5px;top:719px;width:41.5px;height:13px;font-size:10px;font-weight:700;line-height:13px;text-align:center;color:#f4f4f4">RESET</div>
<div class="a" style="left:975.5px;top:736.5px;width:15px;height:14.5px;background:#1d1f25;opacity:.6"></div>
<div class="a" style="left:976.6px;top:737.7px;width:12.9px;height:12.4px;background:#8d8d8d"></div>
<div class="a" style="left:979.5px;top:743px;width:7px;height:1.7px;background:#f4f4f4"></div>
<div class="a" style="left:382.5px;top:757.8px;width:258.7px;height:5px;border-radius:3px;background:#fff"></div>
</body></html>
